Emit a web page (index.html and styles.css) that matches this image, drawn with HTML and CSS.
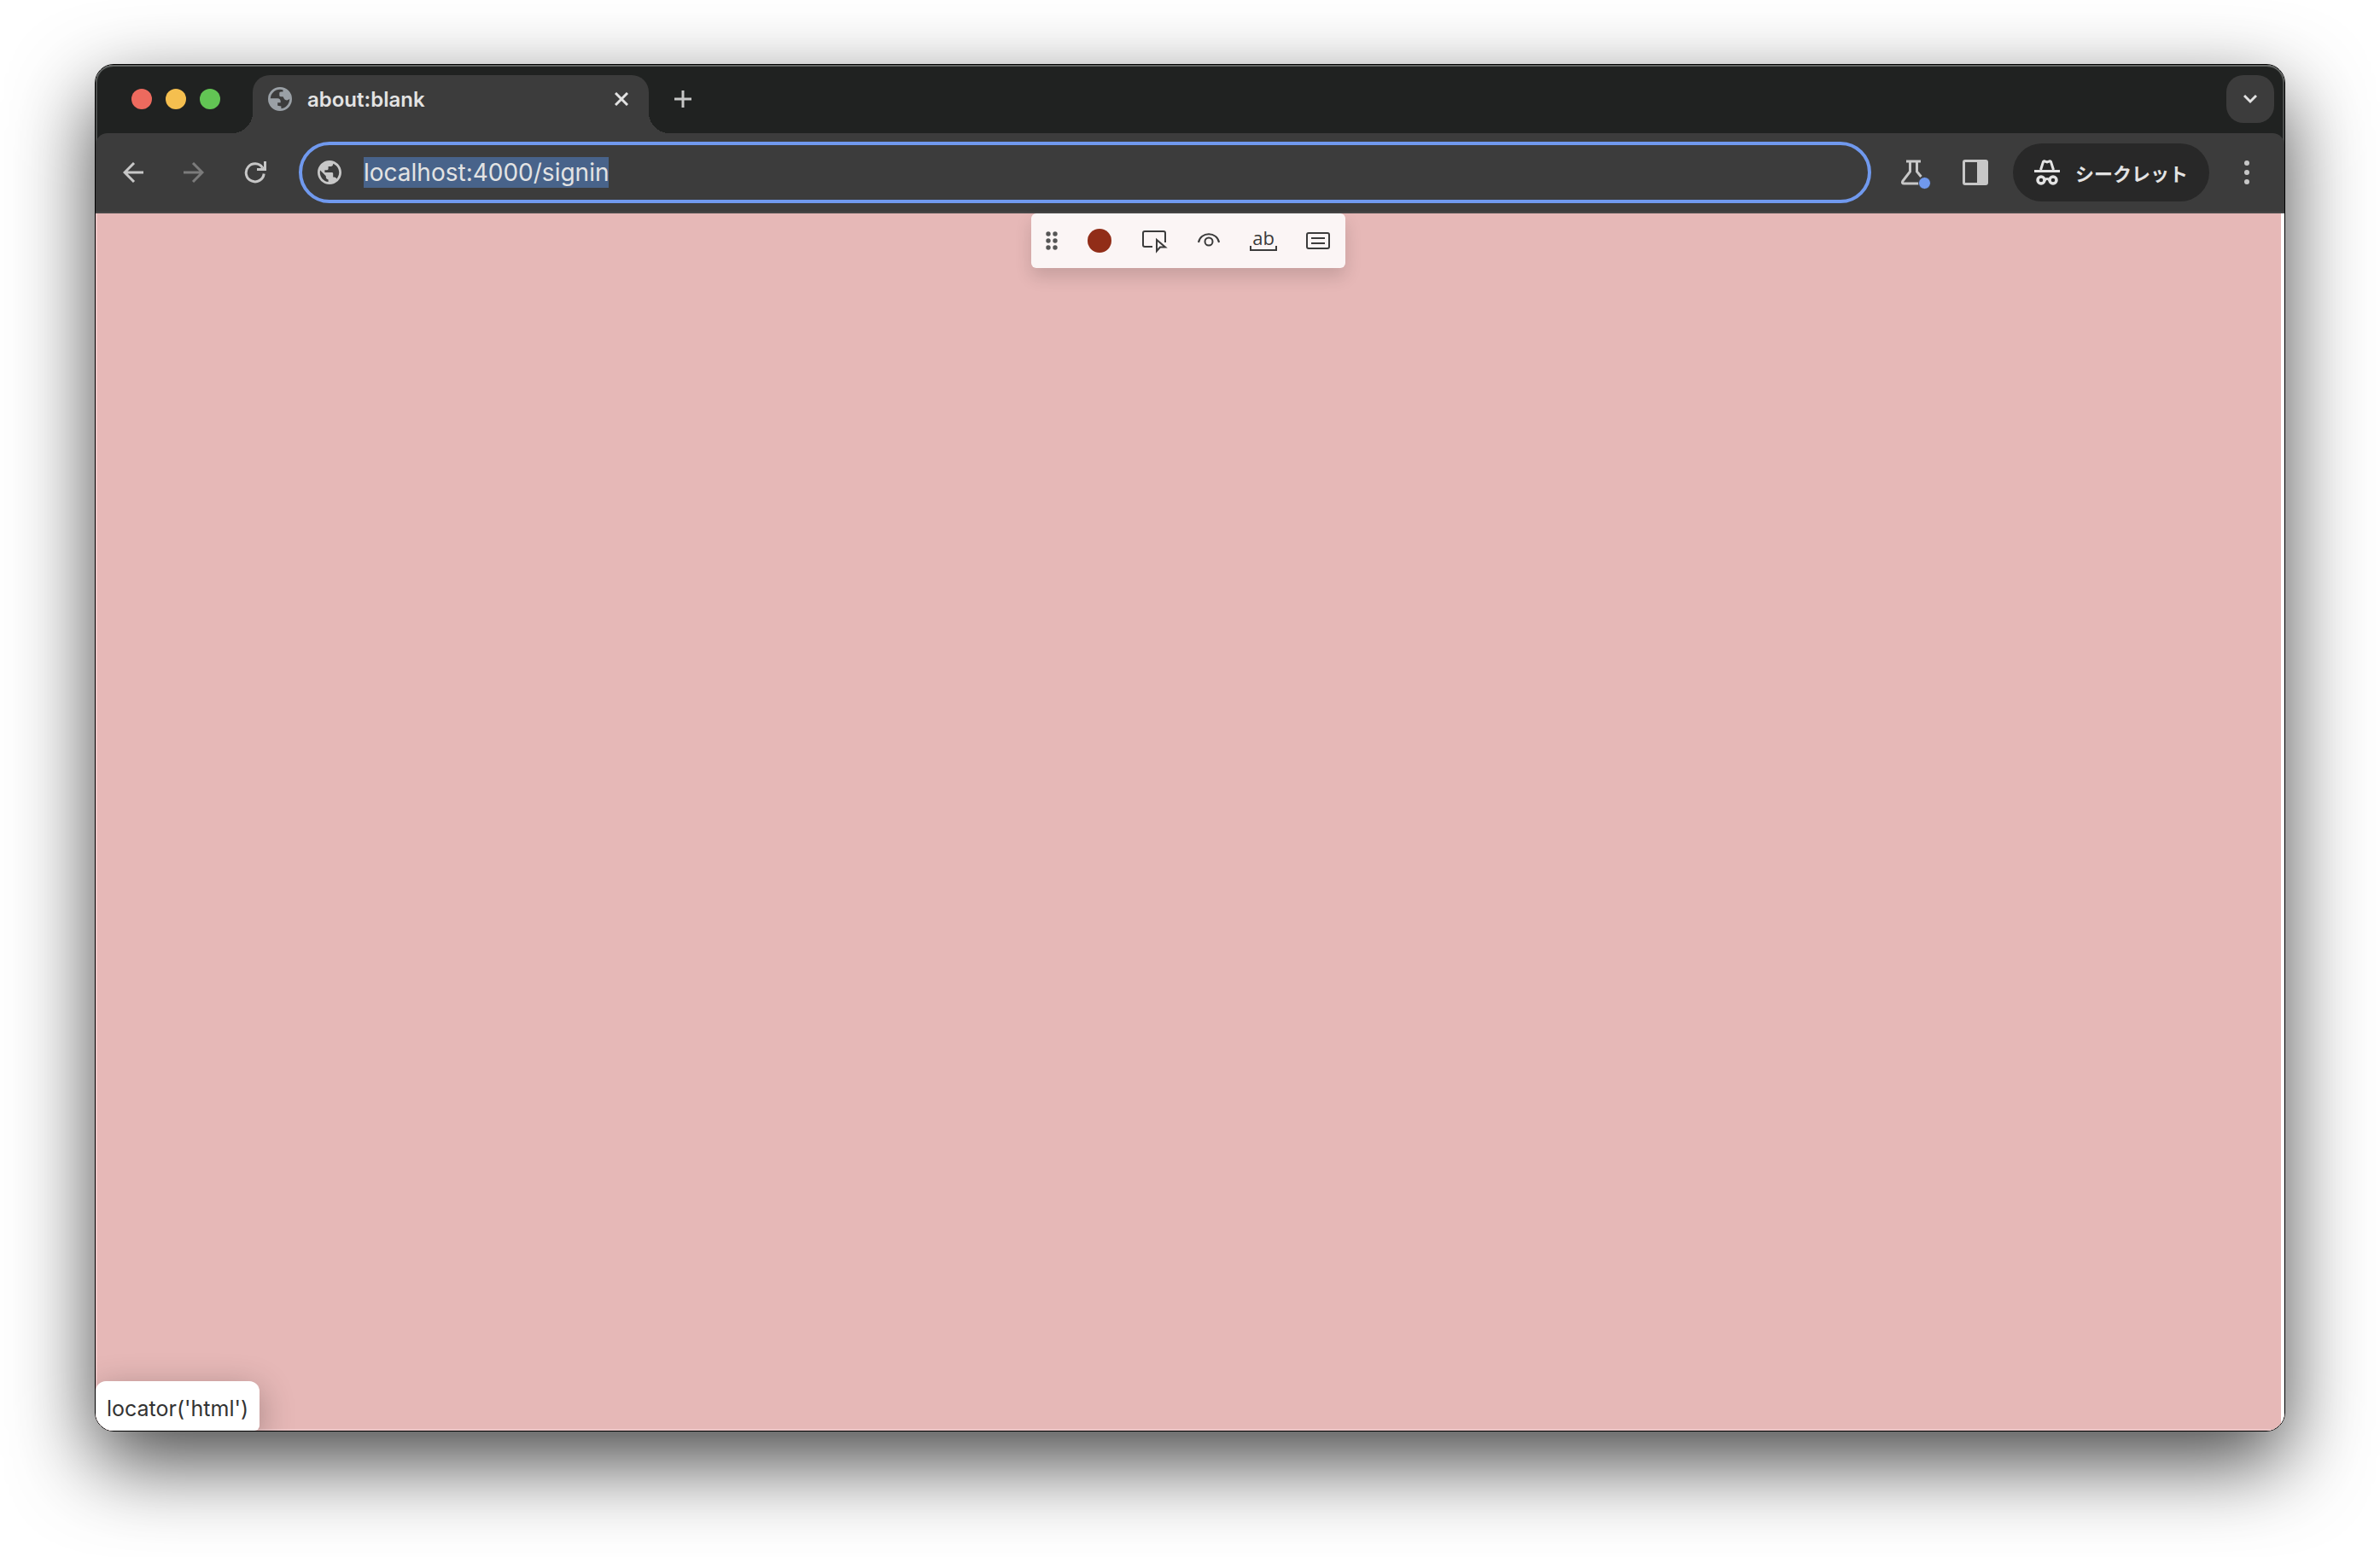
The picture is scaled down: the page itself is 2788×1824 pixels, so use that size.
FILE: index.html
```html
<!DOCTYPE html>
<html lang="ja">
  <head>
    <meta charset="UTF-8" />
    <meta name="viewport" content="width=device-width, initial-scale=1.0" />
    <title>about:blank</title>
    <link rel="stylesheet" href="styles.css">
  </head>
  <body>
    <div class="window">
      <header class="chrome">
        <div class="tabs">
          <div class="lights">
            <button class="light red" aria-label="閉じる"></button>
            <button class="light yellow" aria-label="最小化"></button>
            <button class="light green" aria-label="最大化"></button>
          </div>
          <div class="tab">
            <svg class="favicon" viewBox="2 2 20 20" width="28" height="28">
              <circle cx="12" cy="12" r="9" fill="none" stroke="#9aa0a6" stroke-width="2" />
              <path fill="#9aa0a6" d="M3 11.500h7c1.500 0 2.500 1 2.500 2.500v1H10v2.500l3 .5v3C7 22 3 17 3 11.500zM14.500 3.500v2.500h-1.800c-.7 0-1.200.6-1.200 1.200V9c0 .7.500 1 1 1h2l.8 1.500c.5 1 1.200 1.500 2.500 1.500 1.600 0 2-1.500 3.700-1.500C21 7 18.500 4.300 14.500 3.500z" />
            </svg>
            <span class="title">about:blank</span>
            <button class="icon close" aria-label="タブを閉じる">
              <svg viewBox="0 0 16 16" width="16" height="16"><path d="M1 1l14 14M15 1L1 15" stroke="#e3e3e3" stroke-width="3" /></svg>
            </button>
          </div>
          <button class="icon add" aria-label="新しいタブ">
            <svg viewBox="0 0 20 20" width="20" height="20"><path d="M10 0v20M0 10h20" stroke="#c7c7c7" stroke-width="3" /></svg>
          </button>
          <button class="icon search" aria-label="タブを検索">
            <svg viewBox="0 0 16 16" width="16" height="16"><path d="M1 4l7 7 7-7" fill="none" stroke="#e3e3e3" stroke-width="3" /></svg>
          </button>
        </div>
        <div class="toolbar">
          <nav class="nav">
            <button class="icon" aria-label="戻る">
              <svg viewBox="0 0 24 24" width="24" height="24"><path d="M24 12H2M13 1L2 12l11 11" fill="none" stroke="#c7c7c7" stroke-width="3" /></svg>
            </button>
            <button class="icon" aria-label="進む">
              <svg viewBox="0 0 24 24" width="24" height="24"><path d="M0 12h22M11 1l11 11-11 11" fill="none" stroke="#7b7b7b" stroke-width="3" /></svg>
            </button>
            <button class="icon" aria-label="再読み込み">
              <svg viewBox="0 0 26 26" width="26" height="26"><path d="M23.200 14.500A10.500 10.500 0 1 1 21.500 7.500" fill="none" stroke="#c7c7c7" stroke-width="3" /><path d="M26 0v11H15V8h6l2-2V0z" fill="#c7c7c7" /></svg>
            </button>
          </nav>
          <label class="omnibox">
            <svg viewBox="2 2 20 20" width="28" height="28"><path fill="#c7c7c7" d="M12 2C6.480 2 2 6.480 2 12s4.480 10 10 10 10-4.480 10-10S17.520 2 12 2zm-1 17.930c-3.950-.49-7-3.850-7-7.930 0-.62.080-1.210.210-1.790L9 15v1c0 1.100.9 2 2 2v1.930zm6.900-2.540c-.26-.81-1-1.390-1.900-1.390h-1v-3c0-.55-.45-1-1-1H8v-2h2c.55 0 1-.45 1-1V7h2c1.100 0 2-.9 2-2v-.41c2.930 1.190 5 4.060 5 7.410 0 2.080-.8 3.970-2.100 5.390z" /></svg>
            <input class="url" type="text" value="localhost:4000/signin" aria-label="アドレス" spellcheck="false" />
          </label>
          <div class="actions">
            <button class="icon labs" aria-label="試験運用">
              <svg viewBox="0 0 30 30" width="30" height="30"><path d="M6 2h17M10.500 2v12L2 25q-1.500 3 1.500 3H21M18.500 2v12l5 6" fill="none" stroke="#c7c7c7" stroke-width="3" /></svg>
              <span class="dot"></span>
            </button>
            <button class="icon" aria-label="サイドパネル">
              <svg viewBox="0 0 30 30" width="30" height="30"><rect x="1.500" y="1.500" width="27" height="27" rx="1.500" fill="none" stroke="#c7c7c7" stroke-width="3" /><path d="M17 2h11v26H17z" fill="#c7c7c7" /></svg>
            </button>
            <button class="incognito">
              <svg viewBox="0 0 30 30" width="30" height="30">
                <path d="M0 12h30v3H0z" fill="#e3e3e3" />
                <path d="M7.500 12l3-9.500q.5-1 1.500-.7l3 1.200 3-1.200q1-.3 1.500.7l3 9.500" fill="none" stroke="#e3e3e3" stroke-width="3" />
                <circle cx="8" cy="24" r="4" fill="none" stroke="#e3e3e3" stroke-width="3.500" />
                <circle cx="22" cy="24" r="4" fill="none" stroke="#e3e3e3" stroke-width="3.500" />
                <path d="M12 24q3-3 6 0" fill="none" stroke="#e3e3e3" stroke-width="3" />
              </svg>
              シークレット
            </button>
            <button class="icon" aria-label="メニュー">
              <svg viewBox="0 0 6 28" width="6" height="28" fill="#c7c7c7"><circle cx="3" cy="3" r="3" /><circle cx="3" cy="14" r="3" /><circle cx="3" cy="25" r="3" /></svg>
            </button>
          </div>
        </div>
      </header>

      <main class="page">
        <div class="recorder">
          <svg class="grip" viewBox="0 0 14 22" width="14" height="22" fill="#555">
            <circle cx="3" cy="3" r="2.700" /><circle cx="11" cy="3" r="2.700" />
            <circle cx="3" cy="11" r="2.700" /><circle cx="11" cy="11" r="2.700" />
            <circle cx="3" cy="19" r="2.700" /><circle cx="11" cy="19" r="2.700" />
          </svg>
          <button class="tool" aria-label="Record"><span class="record"></span></button>
          <button class="tool" aria-label="Pick locator">
            <svg viewBox="0 0 32 32" width="32" height="32" fill="none" stroke="#3b3b3b" stroke-width="2"><path d="M14 23H5q-2 0-2-2V7q0-2 2-2h22q2 0 2 2v11" /><path d="M19 15v13l4-4.500h6z" /></svg>
          </button>
          <button class="tool" aria-label="Assert visibility">
            <svg viewBox="0 0 32 32" width="32" height="32" fill="none" stroke="#3b3b3b" stroke-width="2"><path d="M4 18C6 5 26 5 28 18" /><circle cx="16" cy="17" r="4.500" /></svg>
          </button>
          <button class="tool" aria-label="Assert text">
            <span class="ab">ab</span>
          </button>
          <button class="tool" aria-label="Assert value">
            <svg viewBox="0 0 32 32" width="32" height="32" fill="none" stroke="#3b3b3b" stroke-width="2"><rect x="3" y="7" width="26" height="18" rx="2" /><path d="M8 13h16M8 19h16" /></svg>
          </button>
        </div>
        <div class="locator">locator('html')</div>
      </main>
    </div>

    <script>
      const urlEl = document.querySelector('.url');
      urlEl.focus();
      urlEl.select();
    </script>
  </body>
</html>
```

FILE: styles.css
```css
* {
  box-sizing: border-box;
}
body {
  display: flex;
  min-height: 100vh;
  margin: 0;
  padding: 75px 111px 147px;
  background: #fff;
  font-family: Inter, "Noto Sans CJK JP", sans-serif;
}
button {
  display: flex;
  align-items: center;
  justify-content: center;
  padding: 0;
  border: 0;
  background: none;
  font: inherit;
}
svg {
  display: block;
  flex: none;
}
.window {
  flex: 1;
  display: flex;
  flex-direction: column;
  border: 1px solid #000;
  border-radius: 22px;
  overflow: hidden;
  box-shadow: 0 36px 96px rgba(0, 0, 0, 0.72);
}
.chrome {
  background: #202221;
  box-shadow: inset 0 2px #616462, inset 2px 0 #4a4c4b, inset -2px 0 #4a4c4b;
  border-radius: 21px 21px 0 0;
}

/* tab strip */
.tabs {
  display: flex;
  align-items: center;
  height: 80px;
  padding: 0 12px 0 42px;
}
.lights {
  display: flex;
  gap: 16px;
  width: 142px;
}
.light {
  width: 24px;
  height: 24px;
  border-radius: 50%;
}
.red {
  background: #ed6a5e;
}
.yellow {
  background: #f5bf4f;
}
.green {
  background: #62c554;
}
.tab {
  position: relative;
  align-self: flex-end;
  display: flex;
  align-items: center;
  width: 464px;
  height: 68px;
  padding: 0 24px 12px 18px;
  border-radius: 20px 20px 0 0;
  background: #3c3c3c;
}
.tab::before,
.tab::after {
  content: "";
  position: absolute;
  bottom: 0;
  width: 24px;
  height: 24px;
}
.tab::before {
  right: 100%;
  background: radial-gradient(circle at 0 0, transparent 24px, #3c3c3c 24px);
}
.tab::after {
  left: 100%;
  background: radial-gradient(circle at 100% 0, transparent 24px, #3c3c3c 24px);
}
.title {
  flex: 1;
  margin-left: 18px;
  color: #e3e3e3;
  font-size: 24px;
  font-weight: 600;
}
.add {
  margin-left: 30px;
}
.search {
  width: 56px;
  height: 56px;
  margin-left: auto;
  border-radius: 20px;
  background: #3c3c3c;
}

/* toolbar */
.toolbar {
  display: flex;
  align-items: center;
  height: 94px;
  padding: 0 41px 0 32px;
  border-bottom: 2px solid #474747;
  border-radius: 14px 14px 0 0;
  background: #3c3c3c;
}
.nav {
  display: flex;
  gap: 47px;
  width: 206px;
}
.omnibox {
  flex: 1;
  display: flex;
  align-items: center;
  height: 72px;
  padding: 0 32px 0 18px;
  border: 4px solid #7099ee;
  border-radius: 36px;
}
.url {
  flex: 1;
  height: 36px;
  margin-left: 26px;
  padding: 0;
  border: 0;
  outline: 0;
  background: none;
  color: #e3e3e3;
  font: 28px/36px Inter, sans-serif;
}
.url::selection {
  background: #48638a;
  color: #e3e3e3;
}
.actions {
  display: flex;
  align-items: center;
  margin-left: 35px;
}
.labs {
  position: relative;
  margin-right: 42px;
}
.dot {
  position: absolute;
  right: -5px;
  bottom: -5px;
  width: 15px;
  height: 15px;
  border: 1px solid #3c3c3c;
  border-radius: 50%;
  background: #7099ee;
}
.incognito {
  gap: 18px;
  height: 68px;
  margin: 0 41px 0 29px;
  padding: 0 25px;
  border-radius: 34px;
  background: #282828;
  color: #e3e3e3;
  font-family: "Noto Sans CJK JP", sans-serif;
  font-size: 22px;
  font-weight: 700;
}

/* page area */
.page {
  flex: 1;
  display: flex;
  flex-direction: column;
  align-items: center;
  justify-content: space-between;
  border-right: 4px solid #fff;
  background: #e6b8b7;
  box-shadow: inset 2px -2px #ecc5c6;
}
.recorder {
  display: flex;
  align-items: center;
  height: 64px;
  padding-left: 17px;
  border-radius: 6px;
  background: #fbf5f5;
  box-shadow: 0 10px 20px rgba(0, 0, 0, 0.14);
}
.grip {
  margin-right: 17px;
}
.tool {
  width: 64px;
  height: 64px;
}
.record {
  width: 28px;
  height: 28px;
  border-radius: 50%;
  background: #912d18;
}
.ab {
  width: 32px;
  height: 24px;
  border: solid #3b3b3b;
  border-width: 0 2px 2px;
  border-image: linear-gradient(transparent 75%, #3b3b3b 75%) 2;
  color: #3b3b3b;
  font: 22px/16px "Open Sans", sans-serif;
}
.locator {
  align-self: flex-start;
  height: 58px;
  padding: 0 13px;
  border-radius: 12px 12px 6px 0;
  background: #fff;
  box-shadow: 0 10px 40px rgba(0, 0, 0, 0.3);
  color: #333;
  font-size: 25px;
  line-height: 64px;
}
```
